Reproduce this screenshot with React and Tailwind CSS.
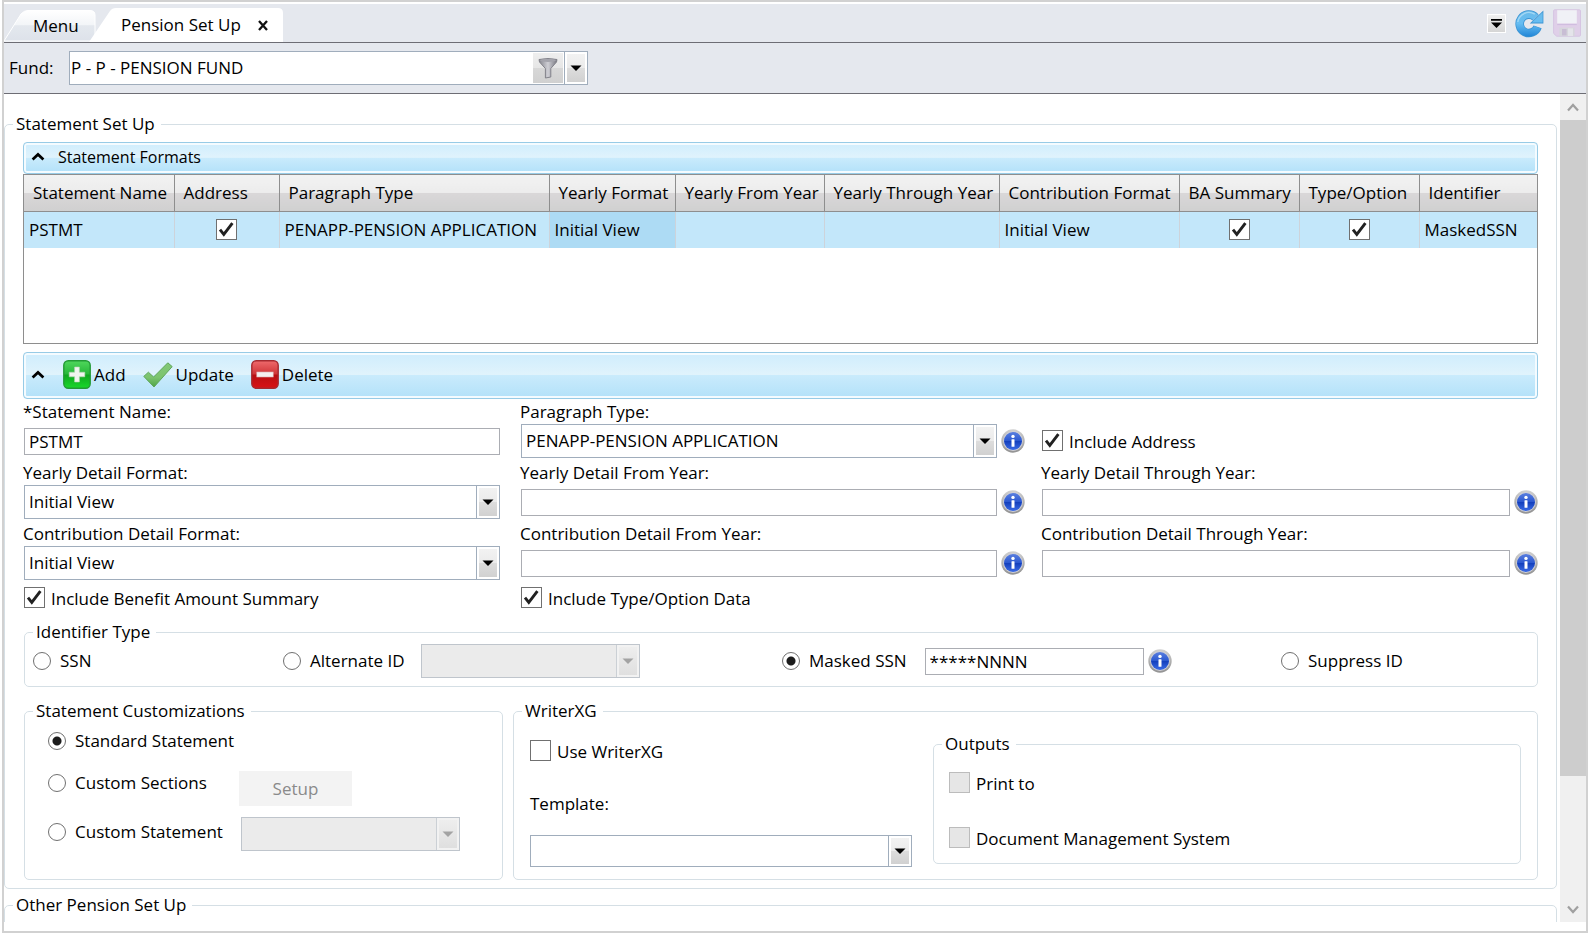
import React, { useId } from "react";

const cx = (...c) => c.filter(Boolean).join(" ");

function Arrow({ disabled }) {
  return (
    <svg width="12" height="6" viewBox="0 0 12 6" aria-hidden="true">
      <path d="M0.5 0.5h11L6 6z" fill={disabled ? "#a3a3a3" : "#000"} />
    </svg>
  );
}

function Combo({ id, label, options, disabled, className, height = "h-[34px]", pad = "pl-1", filter }) {
  return (
    <div
      className={cx(
        "relative flex items-stretch border",
        height,
        disabled ? "border-[#bfc5cc] bg-[#ebebeb]" : "border-[#a0adbc] bg-white",
        className
      )}
    >
      <select
        id={id}
        aria-label={label}
        disabled={disabled}
        className={cx("min-w-0 flex-1 appearance-none bg-transparent pr-6 text-black outline-none", pad)}
      >
        {options.map((o) => (
          <option key={o}>{o}</option>
        ))}
      </select>
      {filter}
      <span
        className={cx(
          "pointer-events-none flex w-[23px] shrink-0 items-center justify-center border-l",
          disabled
            ? "border-[#cbd0d5] bg-linear-to-b from-[#efefef] to-[#dedede] shadow-[inset_0_0_0_2px_#f2f2f2]"
            : "border-[#a0adbc] bg-[linear-gradient(#f3f3f3,#ebebeb_50%,#dddddd_50%,#cfcfcf)] shadow-[inset_0_0_0_2px_#fff]"
        )}
      >
        <Arrow disabled={disabled} />
      </span>
    </div>
  );
}

function TextBox({ id, label, defaultValue, className }) {
  return (
    <input
      id={id}
      aria-label={label}
      type="text"
      defaultValue={defaultValue}
      className={cx("h-[27px] min-w-0 border border-[#abadb3] bg-white pl-1 text-black outline-none", className)}
    />
  );
}

function InfoIcon() {
  const g = useId();
  return (
    <button type="button" aria-label="Information" className="shrink-0">
      <svg width="24" height="24" viewBox="0 0 24 24">
        <defs>
          <linearGradient id={g + "r"} x1="0" y1="0" x2="0" y2="1">
            <stop offset="0" stopColor="#d0d0d0" />
            <stop offset="1" stopColor="#929292" />
          </linearGradient>
          <linearGradient id={g + "b"} x1="0" y1="0" x2="0" y2="1">
            <stop offset="0" stopColor="#5a7fdf" />
            <stop offset="0.5" stopColor="#2a57d0" />
            <stop offset="0.52" stopColor="#1440bd" />
            <stop offset="1" stopColor="#3b6ce6" />
          </linearGradient>
        </defs>
        <circle cx="12" cy="12" r="11.7" fill={`url(#${g}r)`} />
        <circle cx="12" cy="12" r="9.900" fill="#cfcfd6" />
        <circle cx="12" cy="12" r="9" fill={`url(#${g}b)`} />
        <circle cx="12" cy="7.4" r="1.7" fill="#fff" />
        <rect x="10.5" y="10.2" width="3" height="7.6" rx="0.5" fill="#fff" />
      </svg>
    </button>
  );
}

function CheckBox({ label, hideLabel, checked, disabled, className }) {
  return (
    <label className={cx("flex items-start gap-[6px]", className)}>
      <span className="relative flex size-[21px] shrink-0">
        <input
          type="checkbox"
          aria-label={hideLabel ? label : undefined}
          defaultChecked={checked}
          disabled={disabled}
          className="peer size-full appearance-none border border-[#707070] bg-white disabled:border-[#bcbcbc] disabled:bg-[#e6e6e6]"
        />
        <svg
          viewBox="0 0 21 21"
          className="pointer-events-none absolute inset-0 hidden size-full peer-checked:block"
          aria-hidden="true"
        >
          <path d="M4 10.600l3.800 4.800L16.400 4.200" fill="none" stroke="#212121" strokeWidth="2.900" />
        </svg>
      </span>
      {!hideLabel && <span>{label}</span>}
    </label>
  );
}

function Radio({ name, label, checked, className }) {
  return (
    <label className={cx("flex shrink-0 items-center gap-[9px] whitespace-nowrap", className)}>
      <input
        type="radio"
        name={name}
        defaultChecked={checked}
        className="size-[18px] shrink-0 appearance-none rounded-full border border-[#707070] bg-white checked:bg-[radial-gradient(circle,#1c1c1c_4px,#fff_5px)]"
      />
      <span>{label}</span>
    </label>
  );
}

function Group({ title, className, children }) {
  return (
    <fieldset className={cx("min-w-0 rounded-[5px] border border-[#d5dfe5]", className)}>
      <legend className="ml-2 pr-[6px] pl-[3px] leading-6">{title}</legend>
      {children}
    </fieldset>
  );
}

const barFill =
  "rounded-[4px] border border-[#97cbe6] shadow-[inset_0_0_0_2px_#f4fbff] bg-[linear-gradient(#cfedfd,#e0f3fc_48%,#c9ebfc_50%,#b3e1f9)]";

function Chevron() {
  return (
    <svg width="14" height="9" viewBox="0 0 14 9" aria-hidden="true">
      <path d="M1.600 7.400L7 2.400l5.400 5" fill="none" stroke="#000" strokeWidth="2.700" />
    </svg>
  );
}

function AddIcon() {
  return (
    <svg width="28" height="29" viewBox="0 0 28 29" aria-hidden="true">
      <defs>
        <linearGradient id="addFill" x1="0" y1="0" x2="0" y2="1">
          <stop offset="0" stopColor="#4fd75c" />
          <stop offset="0.48" stopColor="#28b83a" />
          <stop offset="0.52" stopColor="#0fa71f" />
          <stop offset="1" stopColor="#19d82c" />
        </linearGradient>
      </defs>
      <rect x="0.8" y="0.8" width="26.4" height="27.4" rx="4.5" fill="url(#addFill)" stroke="#239a35" strokeWidth="1.4" />
      <path d="M11.6 7h4.8v5.2h5.4v4.6h-5.4V22h-4.8v-5.2H6.2v-4.6h5.4z" fill="#f1f5ef" stroke="#b5d4b4" strokeWidth="0.6" />
    </svg>
  );
}

function UpdateIcon() {
  return (
    <svg width="30" height="26" viewBox="0 0 30 26" aria-hidden="true">
      <defs>
        <linearGradient id="tickFill" x1="0" y1="0" x2="0" y2="1">
          <stop offset="0" stopColor="#84c878" />
          <stop offset="0.6" stopColor="#7cc46f" />
          <stop offset="1" stopColor="#4fa548" />
        </linearGradient>
      </defs>
      <path
        d="M0.800 14.400l4.600-4.200 5.200 4.800L24.800 0.800l4.400 3.800L11 25z"
        fill="url(#tickFill)"
        stroke="#5fa65a"
        strokeWidth="1"
        strokeLinejoin="round"
      />
    </svg>
  );
}

function DeleteIcon() {
  return (
    <svg width="28" height="29" viewBox="0 0 28 29" aria-hidden="true">
      <defs>
        <linearGradient id="delFill" x1="0" y1="0" x2="0" y2="1">
          <stop offset="0" stopColor="#ef6a6c" />
          <stop offset="0.48" stopColor="#cf3538" />
          <stop offset="0.52" stopColor="#b80f12" />
          <stop offset="1" stopColor="#d81216" />
        </linearGradient>
      </defs>
      <rect x="0.8" y="0.8" width="26.4" height="27.4" rx="4.5" fill="url(#delFill)" stroke="#a52a30" strokeWidth="1.4" />
      <rect x="5.8" y="12" width="16.4" height="5" fill="#f5f0f0" stroke="#d9b0b0" strokeWidth="0.6" />
    </svg>
  );
}

function RefreshIcon() {
  return (
    <svg width="29" height="29" viewBox="0 0 29 29" aria-hidden="true">
      <defs>
        <linearGradient id="refFill" gradientUnits="userSpaceOnUse" x1="0" y1="0" x2="0" y2="29">
          <stop offset="0" stopColor="#6dbbe8" />
          <stop offset="0.5" stopColor="#66bdf2" />
          <stop offset="1" stopColor="#1a80d4" />
        </linearGradient>
      </defs>
      <path
        d="M20.500 8.400A9.200 9.200 0 1 0 22.600 17.800"
        fill="none"
        stroke="#3a93d2"
        strokeWidth="8.600"
      />
      <path d="M28.400 1.400V14.400H14.800z" fill="#3a93d2" />
      <path
        d="M20.500 8.400A9.200 9.200 0 1 0 22.400 18.200"
        fill="none"
        stroke="url(#refFill)"
        strokeWidth="7"
      />
      <path d="M27.600 3.200V13.600H16.800z" fill="url(#refFill)" />
      <path d="M2.800 13A11.200 11.200 0 0 1 19.800 5.200" fill="none" stroke="#b9e2f8" strokeWidth="1.400" opacity="0.7" />
    </svg>
  );
}

function SaveIcon() {
  return (
    <svg width="28" height="28" viewBox="0 0 28 28" aria-hidden="true">
      <path d="M1.500 0.800h25a1 1 0 0 1 1 1v24.400a1 1 0 0 1-1 1H3.600L0.600 24.400V1.800a1 1 0 0 1 .9-1z" fill="#dfcfe8" stroke="#d6c5e2" />
      <rect x="4.200" y="1.200" width="19.600" height="13.200" fill="#f0f1f6" />
      <path d="M4.200 15.600h19.600" stroke="#cfbbde" />
      <rect x="6.400" y="18.600" width="15.200" height="8.600" fill="#d6d6dc" />
      <rect x="9" y="20" width="4.600" height="6.400" fill="#c8bdd4" />
      <rect x="15" y="19.400" width="5" height="7.600" fill="#e4e4ea" />
    </svg>
  );
}

function FilterIcon() {
  return (
    <svg width="20" height="22" viewBox="0 0 20 22" aria-hidden="true">
      <defs>
        <linearGradient id="funFill" x1="0" y1="0" x2="1" y2="0">
          <stop offset="0" stopColor="#85858d" />
          <stop offset="0.5" stopColor="#cfcfd5" />
          <stop offset="1" stopColor="#777780" />
        </linearGradient>
      </defs>
      <path d="M1 2.500Q10 0.500 19 2.500L18.500 5 12.800 11.500V20L7.400 21V11.500L1.500 5z" fill="url(#funFill)" stroke="#82828a" />
      <ellipse cx="10" cy="3.400" rx="7.800" ry="1.500" fill="#a4a4ac" />
    </svg>
  );
}

function Header() {
  return (
    <header className="flex h-[39px] items-end justify-between border-b border-[#6d6d74] bg-[#e5e8ee]">
      <nav className="flex items-end">
        <a href="#menu" className="relative flex h-8 w-[92px] items-center pl-[29px]">
          <svg className="absolute inset-0" width="92" height="32" viewBox="0 0 92 32" aria-hidden="true">
            <defs>
              <linearGradient id="tabFill" x1="0" y1="0" x2="0" y2="1">
                <stop offset="0" stopColor="#ffffff" />
                <stop offset="0.46" stopColor="#f3f5f8" />
                <stop offset="0.5" stopColor="#e4e8ee" />
                <stop offset="1" stopColor="#dde2ea" />
              </linearGradient>
            </defs>
            <path d="M0 31L17 4Q20 0.500 24 0.500H86Q91 0.500 91 5V31z" fill="url(#tabFill)" stroke="#fff" />
          </svg>
          <span className="relative">Menu</span>
        </a>
        <div className="relative -ml-[7px] flex h-[34px] w-[194px] items-center gap-[17px] pl-8">
          <svg className="absolute inset-0" width="194" height="34" viewBox="0 0 194 34" aria-hidden="true">
            <path d="M0 34L21 3Q23 0 27 0H189Q194 0 194 5V34z" fill="#fff" />
          </svg>
          <a href="#pension" className="relative">
            Pension Set Up
          </a>
          <button type="button" aria-label="Close tab" className="relative">
            <svg width="10" height="11" viewBox="0 0 10 11">
              <path d="M1 1l8 9M9 1L1 10" stroke="#111" strokeWidth="2.300" />
            </svg>
          </button>
        </div>
      </nav>
      <div className="flex items-center gap-[9px] self-stretch pr-[5px]">
        <button
          type="button"
          aria-label="More"
          className="flex size-[19px] items-center justify-center border border-white bg-linear-to-b from-[#f0f0f0] to-[#d5d5d5]"
        >
          <svg width="11" height="9" viewBox="0 0 11 9">
            <path d="M0 0h11v1.800H0zM0 3.400h11L5.500 9z" fill="#000" />
          </svg>
        </button>
        <button type="button" aria-label="Refresh">
          <RefreshIcon />
        </button>
        <button type="button" aria-label="Save">
          <SaveIcon />
        </button>
      </div>
    </header>
  );
}

const columns = [
  ["Statement Name", 150],
  ["Address", 105],
  ["Paragraph Type", 270],
  ["Yearly Format", 126],
  ["Yearly From Year", 149],
  ["Yearly Through Year", 175],
  ["Contribution Format", 180],
  ["BA Summary", 120],
  ["Type/Option", 120],
  ["Identifier", 118],
];

const row = ["PSTMT", true, "PENAPP-PENSION APPLICATION", "Initial View", "", "", "Initial View", true, true, "MaskedSSN"];

function StatementTable() {
  return (
    <div className="h-[170px] overflow-hidden border border-[#8e8e8e] bg-white">
      <table className="w-full table-fixed border-collapse">
        <colgroup>
          {columns.map(([name, width]) => (
            <col key={name} style={{ width }} />
          ))}
        </colgroup>
        <thead>
          <tr className="h-9">
            {columns.map(([name]) => (
              <th
                key={name}
                scope="col"
                className="border-r border-b border-[#8e8e8e] bg-[linear-gradient(#f2f2f2,#ececec_49%,#d9d7d8_51%,#d0d0d0)] p-0 pt-px pl-[9px] text-left font-normal whitespace-nowrap last:border-r-0"
              >
                {name}
              </th>
            ))}
          </tr>
        </thead>
        <tbody>
          <tr className="h-[37px]">
            {row.map((value, i) => (
              <td
                key={i}
                className={cx(
                  "border-r border-[#cdd3da] p-0 whitespace-nowrap last:border-r-0",
                  i === 3 ? "bg-[#addbf4]" : "bg-[#c3e7fa]",
                  value === true ? "" : "pl-[5px]"
                )}
              >
                {value === true ? (
                  <CheckBox label={columns[i][0]} hideLabel checked className="justify-center" />
                ) : (
                  value
                )}
              </td>
            ))}
          </tr>
        </tbody>
      </table>
    </div>
  );
}

function Field({ label, control, info, className }) {
  const id = useId();
  return (
    <div className={cx("min-w-0", className)}>
      <label htmlFor={id} className="block leading-6">
        {label}
      </label>
      <div className="ml-px flex h-[34px] items-center gap-1">
        {control(id)}
        {info && <InfoIcon />}
      </div>
    </div>
  );
}

const combo = (...options) => (id) => <Combo id={id} options={options} className="flex-1" />;
const text = (value) => (id) => <TextBox id={id} defaultValue={value} className="flex-1" />;

function Toolbar() {
  return (
    <div className={cx("mt-2 flex h-[47px] items-center pb-[2px] pl-[7px]", barFill)}>
      <button type="button" aria-label="Collapse">
        <Chevron />
      </button>
      <button type="button" className="ml-[18px] flex items-center gap-[3px]">
        <AddIcon />
        Add
      </button>
      <button type="button" className="ml-[17px] flex items-center gap-[3px]">
        <UpdateIcon />
        Update
      </button>
      <button type="button" className="ml-[17px] flex items-center gap-[3px]">
        <DeleteIcon />
        Delete
      </button>
    </div>
  );
}

function Scrollbar() {
  return (
    <div className="flex w-[26px] shrink-0 flex-col bg-[#f0f0f0]">
      <button type="button" aria-label="Scroll up" className="flex h-[26px] items-center justify-center">
        <svg width="12" height="9" viewBox="0 0 12 9">
          <path d="M1 7.500l5-5.500 5 5.500" fill="none" stroke="#a0a0a0" strokeWidth="2.200" />
        </svg>
      </button>
      <div className="grow-[656] bg-[#cdcdcd]" />
      <div className="grow-[120]" />
      <button type="button" aria-label="Scroll down" className="flex h-[26px] items-center justify-center">
        <svg width="12" height="9" viewBox="0 0 12 9">
          <path d="M1 1.500l5 5.500 5-5.500" fill="none" stroke="#a0a0a0" strokeWidth="2.200" />
        </svg>
      </button>
    </div>
  );
}

export default function App() {
  const fundId = useId();
  const templateId = useId();
  return (
    <div className="flex h-screen flex-col bg-white pl-[2px] font-['Open_Sans','Noto_Sans',sans-serif] text-[17px] leading-6 text-black">
      <div className="flex min-h-0 flex-1 flex-col border-2 border-[#d1d1d1] pt-[2px]">
        <Header />
        <div className="flex h-[51px] shrink-0 items-center border-b border-[#6d6d74] bg-[#e5e8ee] pl-[5px]">
          <label htmlFor={fundId} className="w-[60px]">
            Fund:
          </label>
          <Combo
            id={fundId}
            options={["P - P - PENSION FUND"]}
            className="w-[519px]"
            pad="pl-px"
            filter={
              <button
                type="button"
                aria-label="Filter"
                className="m-px flex w-[30px] items-center justify-center bg-[linear-gradient(#eeeeee,#e6e6e6_50%,#d8d8d8_50%,#d0d0d0)]"
              >
                <FilterIcon />
              </button>
            }
          />
        </div>

        <div className="mb-[9px] flex min-h-0 flex-1">
          <main className="min-w-0 flex-1 overflow-hidden pt-[18px] pr-[3px]">
            <Group title="Statement Set Up">
              <div className="px-[18px] pb-2">
                <div className={cx("mt-[6px] flex h-8 items-center gap-[13px] pb-[3px] pl-[7px] text-base", barFill)}>
                  <button type="button" aria-label="Collapse">
                    <Chevron />
                  </button>
                  <span>Statement Formats</span>
                </div>
                <StatementTable />
                <Toolbar />

                <div className="grid grid-cols-[497fr_521fr_497fr] gap-y-[3px] pt-px">
                  <Field label="*Statement Name:" control={text("PSTMT")} className="pr-5" />
                  <Field label="Paragraph Type:" control={combo("PENAPP-PENSION APPLICATION")} info className="pr-4" />
                  <div className="ml-px flex items-end pb-1">
                    <CheckBox label="Include Address" checked />
                  </div>
                  <Field label="Yearly Detail Format:" control={combo("Initial View")} className="pr-5" />
                  <Field label="Yearly Detail From Year:" control={text("")} info className="pr-4" />
                  <Field label="Yearly Detail Through Year:" control={text("")} info />
                  <Field label="Contribution Detail Format:" control={combo("Initial View")} className="pr-5" />
                  <Field label="Contribution Detail From Year:" control={text("")} info className="pr-4" />
                  <Field label="Contribution Detail Through Year:" control={text("")} info />
                  <CheckBox label="Include Benefit Amount Summary" checked className="mt-1 ml-px" />
                  <CheckBox label="Include Type/Option Data" checked className="mt-1 ml-px" />
                </div>

                <Group title="Identifier Type" className="mt-[9px] ml-px pb-2">
                  <div className="grid grid-cols-[250fr_499fr_499fr_248fr] items-center px-2">
                    <Radio name="identifier" label="SSN" />
                    <div className="flex items-center gap-4">
                      <Radio name="identifier" label="Alternate ID" />
                      <Combo label="Alternate ID type" options={[""]} disabled className="w-[219px]" />
                    </div>
                    <div className="flex items-center gap-[18px]">
                      <Radio name="identifier" label="Masked SSN" checked />
                      <div className="flex items-center gap-1">
                        <TextBox label="Mask format" defaultValue="*****NNNN" className="w-[219px]" />
                        <InfoIcon />
                      </div>
                    </div>
                    <Radio name="identifier" label="Suppress ID" />
                  </div>
                </Group>

                <div className="mt-3 ml-px grid grid-cols-[479fr_1025fr] gap-[10px]">
                  <Group title="Statement Customizations" className="pb-7">
                    <div className="grid grid-cols-[191px_1fr] items-start pl-[23px]">
                      <Radio name="custom" label="Standard Statement" checked className="col-span-2 pt-[6px]" />
                      <Radio name="custom" label="Custom Sections" className="mt-[18px]" />
                      <button
                        type="button"
                        disabled
                        className="mt-[18px] h-[35px] w-[113px] bg-[#f3f3f3] text-[#8a8a8a]"
                      >
                        Setup
                      </button>
                      <Radio name="custom" label="Custom Statement" className="mt-[14px]" />
                      <Combo label="Custom statement" options={[""]} disabled className="mt-[11px] ml-[2px] w-[219px]" />
                    </div>
                  </Group>

                  <Group title="WriterXG">
                    <div className="grid grid-cols-[403fr_588fr_16px] items-start pl-4">
                      <div className="flex flex-col items-start">
                        <CheckBox label="Use WriterXG" className="mt-[17px]" />
                        <label htmlFor={templateId} className="mt-7">
                          Template:
                        </label>
                        <Combo id={templateId} options={[""]} height="h-8" className="mt-[19px] w-[382px]" />
                      </div>
                      <Group title="Outputs" className="mt-[9px] pb-3">
                        <div className="flex flex-col items-start gap-[31px] pt-4 pl-[15px]">
                          <CheckBox label="Print to" disabled />
                          <CheckBox label="Document Management System" disabled />
                        </div>
                      </Group>
                    </div>
                  </Group>
                </div>
              </div>
            </Group>

            <Group title="Other Pension Set Up" className="mt-1 h-40" />
          </main>
          <Scrollbar />
        </div>
      </div>
    </div>
  );
}
